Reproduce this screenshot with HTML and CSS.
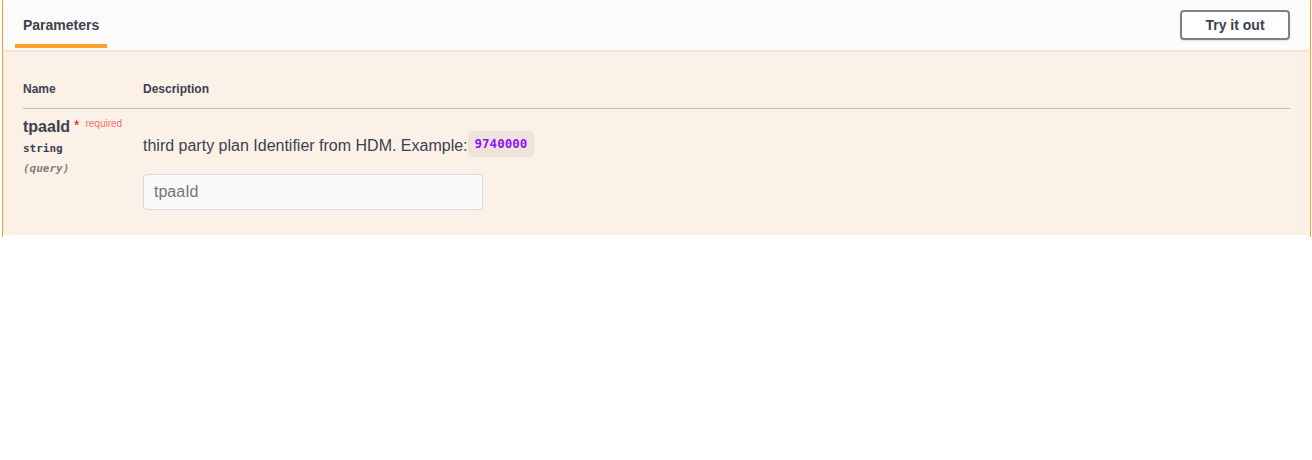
FILE: index.html
```html
<!DOCTYPE html>
<html lang="en">
<head>
<meta charset="utf-8">
<title>Parameters</title>
<link rel="stylesheet" href="styles.css">
</head>
<body>
<div class="opblock">
  <div class="section-header">
    <div class="tab"><span class="tab-label">Parameters</span></div>
    <button class="try-out" type="button">Try it out</button>
  </div>
  <div class="section-body">
    <div class="params">
      <div class="params-head">
        <div class="col-name">Name</div>
        <div class="col-desc">Description</div>
      </div>
      <div class="param-row">
        <div class="col-name">
          <div class="param-name">tpaaId<span class="star">&nbsp;*</span><span class="req">required</span></div>
          <div class="param-type">string</div>
          <div class="param-in">(query)</div>
        </div>
        <div class="col-desc">
          <p class="desc">third party plan Identifier from HDM. Example:<code class="example">9740000</code></p>
          <input class="param-input" type="text" placeholder="tpaaId">
        </div>
      </div>
    </div>
  </div>
</div>
</body>
</html>
```

FILE: styles.css
```css
* { box-sizing: border-box; }

html, body {
  margin: 0;
  padding: 0;
  background: #ffffff;
}

body {
  font-family: "Liberation Sans", Arial, sans-serif;
  color: #3b4151;
}

.opblock {
  margin: 0 1px 0 2px;
  border-left: 1px solid #fca130;
  border-right: 1px solid #fca130;
  padding-bottom: 2px;
}

.section-header {
  height: 50px;
  display: flex;
  justify-content: space-between;
  align-items: stretch;
  padding: 0 20px 0 12px;
  background: #fefcfa;
  box-shadow: 0 1px 2px rgba(0, 0, 0, 0.1);
  position: relative;
  z-index: 1;
}

.tab {
  width: 92px;
  padding: 17px 8px 11px;
  margin-bottom: 2px;
  border-bottom: 4px solid #fca130;
}

.tab-label {
  display: block;
  font-size: 14px;
  line-height: 16px;
  font-weight: 700;
  color: #3b4151;
}

.try-out {
  align-self: center;
  width: 110px;
  height: 30px;
  border: 2px solid #808080;
  border-radius: 4px;
  background: #ffffff;
  font-family: "Liberation Sans", Arial, sans-serif;
  font-size: 14px;
  font-weight: 700;
  color: #3b4151;
  padding: 0;
  box-shadow: 0 1px 2px rgba(0, 0, 0, 0.1);
}

.section-body {
  background: #fbf1e7;
  padding: 32px 20px 25px;
}

.params-head {
  display: flex;
  font-size: 12px;
  line-height: 15px;
  font-weight: 700;
  padding-bottom: 11px;
  border-bottom: 1px solid #bcbcbc;
}

.col-name {
  width: 120px;
  flex: none;
}

.col-desc {
  flex: 1;
}

.param-row {
  display: flex;
}

.param-row .col-name {
  padding-top: 9px;
}

.param-name {
  font-size: 16px;
  line-height: 18px;
  font-weight: 700;
  color: #3b4151;
  white-space: nowrap;
}

.star {
  color: #ff0000;
  font-weight: 400;
  font-size: 14px;
  position: relative;
  top: -2px;
}

.req {
  color: rgba(255, 0, 0, 0.6);
  font-size: 10px;
  font-weight: 400;
  position: relative;
  top: -5px;
  padding-left: 6px;
}

.param-type,
.param-in {
  font-family: "DejaVu Sans Mono", "Liberation Mono", monospace;
  font-size: 11px;
  line-height: 20px;
  font-weight: 700;
  color: #3b4151;
}

.param-type {
  margin-top: 1px;
}

.param-in {
  font-style: italic;
  color: #808080;
}

.desc {
  margin: 22px 0 0;
  font-size: 16px;
  line-height: 24px;
  color: #3b4151;
}

.example {
  display: inline-block;
  font-family: "DejaVu Sans Mono", "Liberation Mono", monospace;
  font-size: 12.5px;
  line-height: 16px;
  font-weight: 700;
  color: #9012fe;
  background: rgba(0, 0, 0, 0.05);
  border-radius: 4px;
  padding: 5px 7px;
  vertical-align: 3px;
}

.param-input {
  display: block;
  margin-top: 16px;
  width: 340px;
  height: 36px;
  padding: 0 10px;
  border: 1px solid #d9d9d9;
  border-radius: 4px;
  background: #fafafa;
  font-family: "Liberation Sans", Arial, sans-serif;
  font-size: 16px;
  color: #3b4151;
  outline: none;
}

.param-input::placeholder {
  color: #757575;
}
```
